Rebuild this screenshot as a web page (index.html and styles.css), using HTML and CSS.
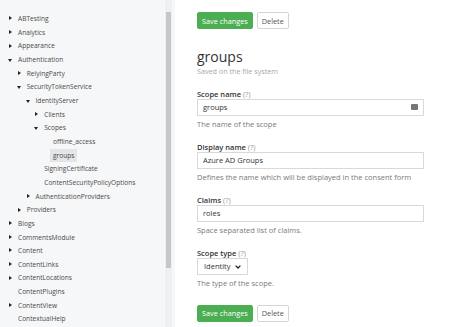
FILE: index.html
```html
<!DOCTYPE html>
<html lang="en">

<head>
    <meta charset="UTF-8">
    <meta name="viewport" content="width=device-width, initial-scale=1.0">
    <title>Scopes - groups</title>
    <link rel="stylesheet" href="styles.css">
</head>

<body>
    <div class="layout">
        <div class="sidebar">
            <ul class="tree">
                <li><span class="node closed">ABTesting</span></li>
                <li><span class="node closed">Analytics</span></li>
                <li><span class="node closed">Appearance</span></li>
                <li><span class="node open">Authentication</span>
                    <ul>
                        <li><span class="node closed">RelyingParty</span></li>
                        <li><span class="node open">SecurityTokenService</span>
                            <ul>
                                <li><span class="node open">IdentityServer</span>
                                    <ul>
                                        <li><span class="node closed">Clients</span></li>
                                        <li><span class="node open">Scopes</span>
                                            <ul>
                                                <li><span class="node">offline_access</span></li>
                                                <li><span class="node"><span class="selected">groups</span></span></li>
                                            </ul>
                                        </li>
                                        <li><span class="node">SigningCertificate</span></li>
                                        <li><span class="node">ContentSecurityPolicyOptions</span></li>
                                    </ul>
                                </li>
                                <li><span class="node closed">AuthenticationProviders</span></li>
                            </ul>
                        </li>
                        <li><span class="node closed">Providers</span></li>
                    </ul>
                </li>
                <li><span class="node closed">Blogs</span></li>
                <li><span class="node closed">CommentsModule</span></li>
                <li><span class="node closed">Content</span></li>
                <li><span class="node closed">ContentLinks</span></li>
                <li><span class="node closed">ContentLocations</span></li>
                <li><span class="node">ContentPlugins</span></li>
                <li><span class="node closed">ContentView</span></li>
                <li><span class="node">ContextualHelp</span></li>
            </ul>
            <div class="scroll-track"><div class="scroll-thumb"></div></div>
        </div>

        <div class="main">
            <div class="actions">
                <button class="btn btn-save">Save changes</button>
                <button class="btn btn-delete">Delete</button>
            </div>

            <h1>groups</h1>
            <div class="subtitle">Saved on the file system</div>

            <div class="field">
                <label for="scopeName">Scope name <span class="hint">(?)</span></label>
                <div class="input-wrap">
                    <input type="text" id="scopeName" value="groups">
                    <span class="input-icon"></span>
                </div>
                <div class="help">The name of the scope</div>
            </div>

            <div class="field">
                <label for="displayName">Display name <span class="hint">(?)</span></label>
                <input type="text" id="displayName" value="Azure AD Groups">
                <div class="help">Defines the name which will be displayed in the consent form</div>
            </div>

            <div class="field">
                <label for="claims">Claims <span class="hint">(?)</span></label>
                <input type="text" id="claims" value="roles">
                <div class="help">Space separated list of claims.</div>
            </div>

            <div class="field">
                <label for="scopeType">Scope type <span class="hint">(?)</span></label>
                <div class="select-wrap">
                    <select id="scopeType">
                        <option>Identity</option>
                        <option>Resource</option>
                    </select>
                    <svg class="chevron" width="6" height="4" viewBox="0 0 6 4">
                        <path d="M0.6 0.6 L3 3 L5.4 0.6" fill="none" stroke="#222" stroke-width="1.3"/>
                    </svg>
                </div>
                <div class="help">The type of the scope.</div>
            </div>

            <div class="actions bottom">
                <button class="btn btn-save">Save changes</button>
                <button class="btn btn-delete">Delete</button>
            </div>
        </div>
    </div>
</body>

</html>
```

FILE: styles.css
```css
body {
    margin: 0;
    font-family: 'Open Sans', 'Liberation Sans', sans-serif;
    font-size: 7.5px;
    color: #333;
    background-color: #fff;
}

.layout {
    display: flex;
    height: 327px;
    overflow: hidden;
}

/* left tree */
.sidebar {
    position: relative;
    width: 175px;
    flex-shrink: 0;
    background-color: #f6f7f8;
    overflow: hidden;
}

.tree,
.tree ul {
    list-style: none;
    margin: 0;
}

.tree {
    padding: 12px 0 0 9px;
}

.tree ul {
    padding-left: 8.75px;
}

.node {
    position: relative;
    display: inline-block;
    padding-left: 9px;
    font-size: 6.6px;
    line-height: 13.65px;
    color: #4a4a4a;
    white-space: nowrap;
}

.node.closed::before,
.node.open::before {
    content: "";
    position: absolute;
    top: 50%;
    width: 0;
    height: 0;
}

.node.closed::before {
    left: 0;
    margin-top: -2.5px;
    border-top: 2.5px solid transparent;
    border-bottom: 2.5px solid transparent;
    border-left: 3px solid #222;
}

.node.open::before {
    left: -1px;
    margin-top: -1px;
    border-left: 2.5px solid transparent;
    border-right: 2.5px solid transparent;
    border-top: 3px solid #222;
}

.selected {
    display: inline-block;
    margin-left: -3px;
    padding: 0 3px;
    line-height: 13px;
    background-color: #e3e5e7;
}

.scroll-track {
    position: absolute;
    top: 0;
    right: 3px;
    bottom: 0;
    width: 7px;
    background-color: #eef0f1;
}

.scroll-thumb {
    margin: 12px 0 0 1px;
    width: 5px;
    height: 256px;
    background-color: #c6c7c8;
}

/* right content */
.main {
    flex: 1;
    padding: 12px 0 0 22px;
}

.actions {
    display: flex;
    gap: 4px;
}

.actions.bottom {
    margin-top: 17px;
}

.btn {
    height: 17px;
    padding: 0 4px;
    font-family: inherit;
    font-size: 7.3px;
    border-radius: 2px;
    cursor: pointer;
}

.btn-save {
    background-color: #4cae52;
    border: 1px solid #4cae52;
    color: #fff;
}

.btn-delete {
    background-color: #fff;
    border: 1px solid #d4d4d4;
    color: #555;
}

h1 {
    margin: 18.5px 0 0;
    font-size: 14px;
    font-weight: normal;
    line-height: 18px;
    color: #333;
}

.subtitle {
    font-size: 7.2px;
    line-height: 10px;
    color: #a8a8a8;
}

.field {
    margin-top: 13px;
    width: 227px;
}

label {
    display: block;
    line-height: 10px;
    font-weight: 600;
    color: #333;
}

.hint {
    font-weight: normal;
    color: #999;
}

input,
select {
    display: block;
    box-sizing: border-box;
    width: 100%;
    height: 17px;
    padding: 0 5px;
    font-family: inherit;
    font-size: 7.5px;
    color: #333;
    background-color: #fff;
    border: 1px solid #d9d9d9;
    border-radius: 0;
    outline: none;
}

.input-wrap,
.select-wrap {
    position: relative;
}

.input-icon {
    position: absolute;
    top: 5px;
    right: 6px;
    width: 7px;
    height: 6px;
    background-color: #777;
    border-radius: 1px;
}

.select-wrap {
    width: 51px;
}

select {
    appearance: none;
    -webkit-appearance: none;
    padding-left: 6px;
}

.chevron {
    position: absolute;
    top: 7px;
    right: 7px;
}

.help {
    margin-top: 3px;
    line-height: 10px;
    color: #7a7a7a;
}
```
